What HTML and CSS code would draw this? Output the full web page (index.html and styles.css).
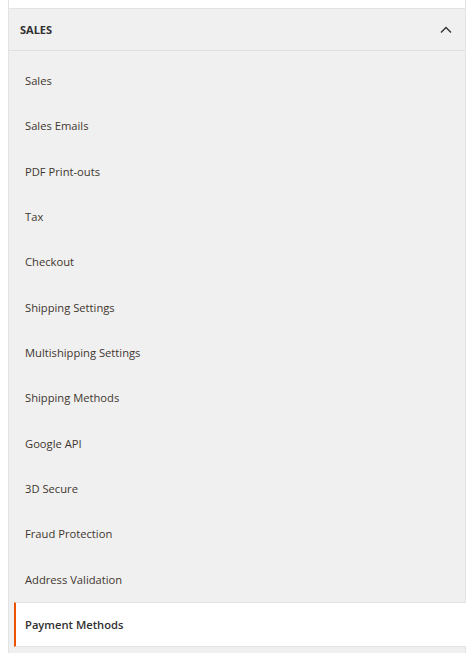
FILE: index.html
```html
<!DOCTYPE html>
<html lang="en">

<head>
    <meta charset="utf-8">
    <meta name="viewport" content="width=device-width, initial-scale=1.0">
    <title>Configuration - Sales</title>
    <link rel="stylesheet" href="styles.css">
</head>

<body>
    <div class="nav-block">
        <div class="forrige"></div>

        <div class="nav-titel">
            <strong>Sales</strong>
            <svg class="pil" width="12" height="8" viewBox="0 0 12 8">
                <path d="M1 6.5 L6 1.5 L11 6.5" fill="none" stroke="#333" stroke-width="1.4" />
            </svg>
        </div>

        <ul class="nav-liste">
            <li class="nav-punkt"><a href="#">Sales</a></li>
            <li class="nav-punkt"><a href="#">Sales Emails</a></li>
            <li class="nav-punkt"><a href="#">PDF Print-outs</a></li>
            <li class="nav-punkt"><a href="#">Tax</a></li>
            <li class="nav-punkt"><a href="#">Checkout</a></li>
            <li class="nav-punkt"><a href="#">Shipping Settings</a></li>
            <li class="nav-punkt"><a href="#">Multishipping Settings</a></li>
            <li class="nav-punkt"><a href="#">Shipping Methods</a></li>
            <li class="nav-punkt"><a href="#">Google API</a></li>
            <li class="nav-punkt"><a href="#">3D Secure</a></li>
            <li class="nav-punkt"><a href="#">Fraud Protection</a></li>
            <li class="nav-punkt"><a href="#">Address Validation</a></li>
            <li class="nav-punkt valgt"><a href="#">Payment Methods</a></li>
        </ul>
    </div>
</body>

</html>
```

FILE: styles.css
```css
body {
    margin: 0;
    background: #fff;
    font-family: "Open Sans", "Liberation Sans", sans-serif;
    color: #41362f;
}

.nav-block {
    margin: 0 8px;
    border-left: 1px solid #e3e3e3;
    border-right: 1px solid #e3e3e3;
}

.forrige {
    height: 8px;
    background: #fff;
    border-bottom: 1px solid #e3e3e3;
}

.nav-titel {
    display: flex;
    align-items: center;
    justify-content: space-between;
    height: 41px;
    padding: 0 13px 0 11px;
    background: #f0f0f0;
    border-bottom: 1px solid #e0e0e0;
}

.nav-titel strong {
    font-size: 11px;
    font-weight: 700;
    text-transform: uppercase;
    color: #303030;
}

.pil {
    display: block;
}

.nav-liste {
    list-style: none;
    margin: 0;
    padding: 7px 0 6px;
    background: #f0f0f0;
}

.nav-punkt {
    height: 45.33px;
    display: flex;
    align-items: center;
}

.nav-punkt a {
    padding-left: 16px;
    font-size: 11.2px;
    color: #41362f;
    text-decoration: none;
}

.valgt {
    margin-left: 5px;
    margin-right: -1px;
    background: #fff;
    border-left: 2px solid #eb5202;
    border-top: 1px solid #e3e3e3;
    border-bottom: 1px solid #e3e3e3;
    box-sizing: border-box;
}

.valgt a {
    padding-left: 9px;
    font-weight: 600;
    color: #303030;
}
```
